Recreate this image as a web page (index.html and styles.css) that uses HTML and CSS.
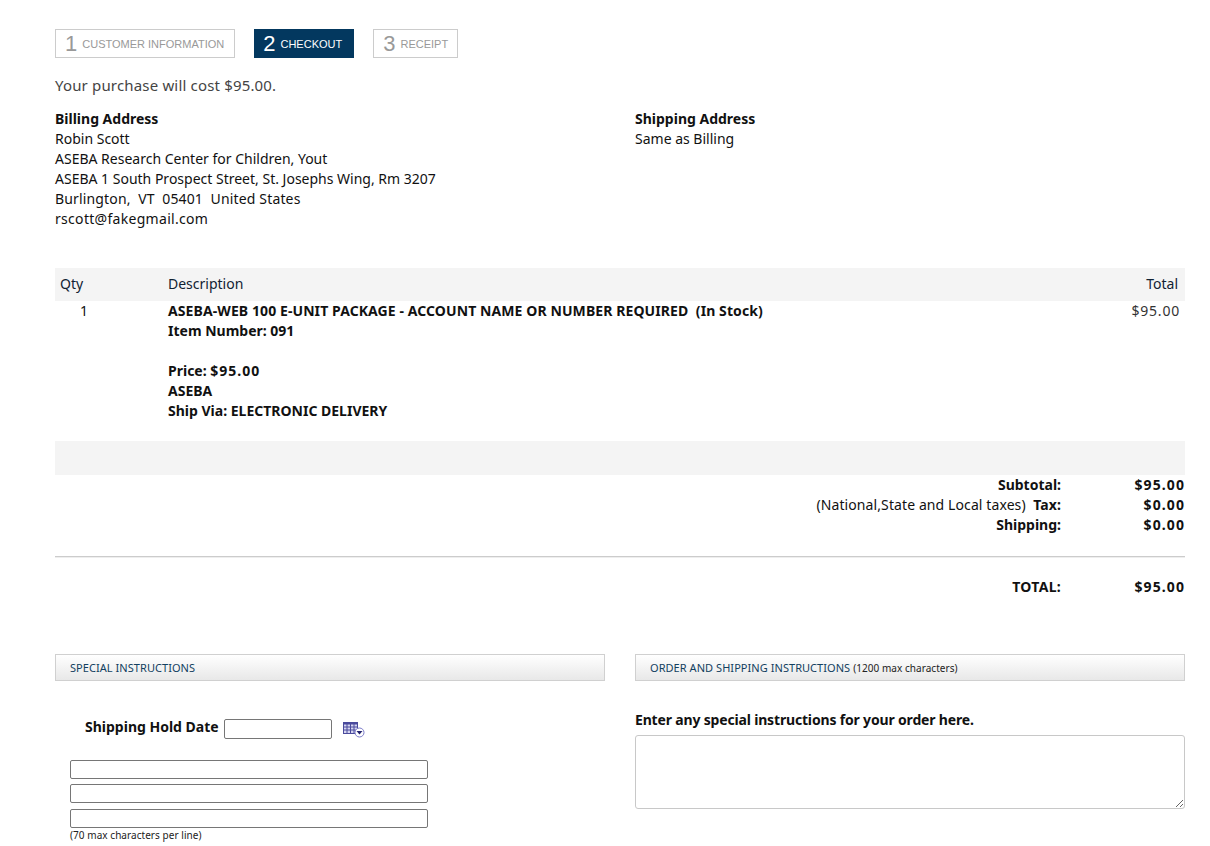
FILE: index.html
```html
<!DOCTYPE html>
<html lang="en">
<head>
<meta charset="utf-8">
<title>Checkout</title>
<link rel="stylesheet" href="styles.css">
</head>
<body>
<main class="page">
  <ol class="wizard">
    <li class="step"><span class="num">1</span><span class="label">CUSTOMER INFORMATION</span></li>
    <li class="step active"><span class="num">2</span><span class="label">CHECKOUT</span></li>
    <li class="step last"><span class="num">3</span><span class="label">RECEIPT</span></li>
  </ol>
  <p class="cost">Your purchase will cost $95.00.</p>
  <section class="addresses">
    <div class="address">
      <strong>Billing Address</strong>
      <span>Robin Scott</span>
      <span>ASEBA Research Center for Children, Yout</span>
      <span>ASEBA 1 South Prospect Street, St. Josephs Wing, Rm 3207</span>
      <span class="city">Burlington, &nbsp;VT &nbsp;05401 &nbsp;United States</span>
      <span class="email">rscott@fakegmail.com</span>
    </div>
    <div class="address">
      <strong>Shipping Address</strong>
      <span>Same as Billing</span>
    </div>
  </section>
  <section class="items">
    <div class="item-head"><span class="c-qty">Qty</span><span class="c-desc">Description</span><span class="c-total">Total</span></div>
    <div class="item-row">
      <span class="c-qty-val">1</span>
      <div class="c-desc item-desc">
        <span class="item-title">ASEBA-WEB 100 E-UNIT PACKAGE - ACCOUNT NAME OR NUMBER REQUIRED &nbsp;(In Stock)</span>
        <span>Item Number: 091</span>
        <span class="spaced">Price: <span class="money">$95.00</span></span>
        <span>ASEBA</span>
        <span>Ship Via: ELECTRONIC DELIVERY</span>
      </div>
      <span class="c-total-val">$95.00</span>
    </div>
    <div class="item-foot"></div>
  </section>
  <section class="totals">
    <div class="sum"><span class="sum-label"><b>Subtotal:</b></span><b class="sum-val">$95.00</b></div>
    <div class="sum"><span class="sum-label tax">(National,State and Local taxes) &nbsp;<b>Tax:</b></span><b class="sum-val">$0.00</b></div>
    <div class="sum"><span class="sum-label"><b>Shipping:</b></span><b class="sum-val">$0.00</b></div>
    <hr class="rule">
    <div class="sum"><span class="sum-label"><b class="grand">TOTAL:</b></span><b class="sum-val">$95.00</b></div>
  </section>
  <section class="panels">
    <div class="panel">
      <h2 class="panel-head">SPECIAL INSTRUCTIONS</h2>
      <div class="hold">
        <label class="hold-label" for="hold">Shipping Hold Date</label>
        <input id="hold" class="hold-input" type="text">
        <svg class="cal" width="23" height="16" viewBox="0 0 23 16" aria-hidden="true">
          <rect x="0.5" y="0.5" width="14" height="11" fill="#d5d5f0" stroke="#4a4a9c"/>
          <rect x="0" y="0" width="15" height="2.5" fill="#4a4a9c"/>
          <path d="M4 1v10M7.5 1v10M11 1v10M1 5h13M1 8h13" stroke="#4a4a9c" fill="none"/>
          <circle cx="16.5" cy="10.5" r="4.5" fill="#fff" stroke="#7a7ac8"/>
          <path d="M13.5 9h6L16.5 12.5z" fill="#23236e"/>
        </svg>
      </div>
      <div class="lines">
        <input class="line" type="text">
        <input class="line" type="text">
        <input class="line" type="text">
        <small class="hint">(70 max characters per line)</small>
      </div>
    </div>
    <div class="panel">
      <h2 class="panel-head">ORDER AND SHIPPING INSTRUCTIONS <small>(1200 max characters)</small></h2>
      <label class="note-label" for="note">Enter any special instructions for your order here.</label>
      <textarea id="note" class="note"></textarea>
    </div>
  </section>
</main>
</body>
</html>
```
FILE: styles.css
```css
* { box-sizing: border-box; }
html, body { margin: 0; padding: 0; background: #fff; }
body {
  font-family: "Noto Sans", "Open Sans", sans-serif;
  font-size: 14px;
  line-height: 20px;
  color: #111;
  height: 846px;
  overflow: hidden;
}
.page { padding: 29px 25px 0 55px; }
.wizard {
  list-style: none;
  margin: 0;
  padding: 0;
  display: flex;
  gap: 19px;
  height: 29px;
}
.step {
  display: flex;
  align-items: center;
  gap: 5px;
  height: 29px;
  padding: 0 10px 0 9px;
  border: 1px solid #ccc;
  color: #999;
  font-family: "Liberation Sans", Arial, sans-serif;
}
.step.active { background: #03385f; border-color: #03385f; color: #fff; padding: 0 11px 0 8px; }
.step.last { padding-right: 9px; }
.num { font-size: 22px; line-height: 1; }
.label { font-size: 11px; }
.cost { margin: 17px 0 0; height: 20px; color: #444; font-size: 15px; letter-spacing: .17px; }
.addresses {
  display: grid;
  grid-template-columns: 580px 1fr;
  margin-top: 14px;
  height: 159px;
}
.address { display: flex; flex-direction: column; }
.address strong { font-weight: 700; }
.city { letter-spacing: .15px; }
.email { letter-spacing: .3px; }
.item-head {
  display: grid;
  grid-template-columns: 113px 1fr 80px;
  align-items: center;
  height: 33px;
  padding-bottom: 2px;
  background: #f4f4f4;
  color: #123;
}
.c-qty { padding-left: 5px; }
.c-total { text-align: right; padding-right: 7px; }
.item-row {
  display: grid;
  grid-template-columns: 113px 1fr 80px;
  height: 140px;
}
.c-qty-val { padding-left: 25px; }
.item-desc { display: flex; flex-direction: column; font-weight: 700; }
.item-title { letter-spacing: .09px; }
.money { letter-spacing: 1px; }
.spaced { margin-top: 20px; }
.c-total-val { text-align: right; padding-right: 5px; color: #333; letter-spacing: .8px; }
.item-foot { height: 34px; background: #f4f4f4; }
.totals { padding-top: 0; }
.sum { display: grid; grid-template-columns: 1fr 124px; height: 20px; }
.sum-label { text-align: right; }
.tax { letter-spacing: .1px; }
.grand { letter-spacing: .3px; }
.sum-val { text-align: right; letter-spacing: 1.1px; }
.rule { margin: 21px 0 19px; border: 0; border-top: 1px solid #ccc; border-bottom: 1px solid #eee; height: 2px; }
.panels {
  display: grid;
  grid-template-columns: 550px 550px;
  gap: 30px;
  margin-top: 57px;
}
.panel { min-width: 0; }
.panel-head {
  margin: 0;
  height: 27px;
  padding: 0 14px;
  border: 1px solid #d0d0d0;
  background: linear-gradient(#fff, #e8e8e8);
  color: #123f5f;
  font-size: 11px;
  font-weight: 400;
  line-height: 25px;
  letter-spacing: .05px;
}
.panel-head small { font-size: 10px; color: #222; }
.hold {
  display: flex;
  align-items: center;
  margin-top: 36px;
  padding-left: 30px;
  height: 24px;
}
.hold-label { font-weight: 700; margin-top: -4px; }
.hold-input { width: 108px; height: 20px; margin-left: 5px; border: 1px solid #767676; border-radius: 2px; padding: 0; }
.cal { margin-left: 11px; margin-top: 2px; }
.lines { display: flex; flex-direction: column; padding-left: 15px; margin-top: 19px; }
.line { width: 358px; height: 19px; margin-bottom: 5px; border: 1px solid #767676; border-radius: 2px; padding: 0; }
.line:nth-child(2) { margin-bottom: 6px; }
.hint { font-size: 10px; line-height: 12px; margin-top: -4px; color: #222; letter-spacing: .05px; }
.note-label { display: block; margin-top: 29px; font-weight: 700; letter-spacing: -.17px; }
.note {
  display: block;
  width: 550px;
  height: 74px;
  margin-top: 5px;
  border: 1px solid #c8c8c8;
  border-radius: 3px;
}
```
